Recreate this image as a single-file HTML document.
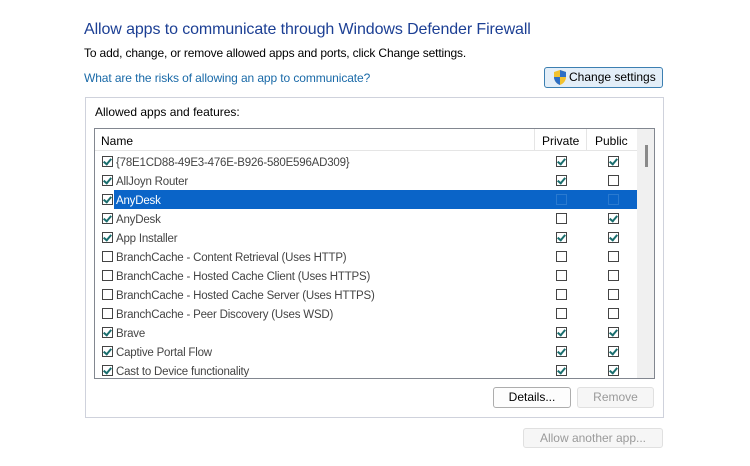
<!DOCTYPE html>
<html><head><style>
*{margin:0;padding:0;box-sizing:border-box}
body{width:750px;height:466px;background:#fff;font-family:"Segoe UI","Liberation Sans",sans-serif;position:relative;overflow:hidden;color:#000}
.a{position:absolute;white-space:nowrap}
.cb{position:absolute;width:11px;height:11px;border:1px solid #444;background:#fff}
.cb.c::after{content:"";position:absolute;left:2px;top:0px;width:3px;height:6px;border:solid #1a6e6e;border-width:0 2px 2px 0;transform:rotate(40deg)}
.cb.d{border-color:#2a7ad0;background:#0a64c8}
.btn{position:absolute;border:1px solid #adadad;border-radius:3px;background:#fdfdfd;font-size:12px;text-align:center;line-height:19px}
.dis{color:#9a9a9a;border-color:#e0e0e0;background:#f6f6f6}
</style></head><body>
<div class="a" style="left:84px;top:21px;font-size:16px;color:#1c3f94;letter-spacing:-0.1px">Allow apps to communicate through Windows Defender Firewall</div>
<div class="a" style="left:84px;top:46px;font-size:12px;letter-spacing:-0.15px">To add, change, or remove allowed apps and ports, click Change settings.</div>
<div class="a" style="left:84px;top:71px;font-size:12px;color:#1a6aa8;letter-spacing:-0.1px">What are the risks of allowing an app to communicate?</div>
<div class="btn" style="left:544px;top:67px;width:119px;height:21px;border-color:#3c7fb1;background:#e3eef8;text-align:left;padding-left:24px">Change settings</div>
<svg class="a" style="left:552px;top:69px" width="16" height="17" viewBox="0 0 16 17"><path d="M8 1 L14 3 V8 C14 12 11 15 8 16 C5 15 2 12 2 8 V3 Z" fill="#f2c230"/><path d="M8 1 L14 3 V8 H8 Z M8 8 V16 C5 15 2 12 2 8 Z" fill="#2d6fc6"/></svg>
<div class="a" style="left:85px;top:97px;width:579px;height:321px;border:1px solid #cfd2dc"></div>
<div class="a" style="left:95px;top:105px;font-size:12px">Allowed apps and features:</div>
<div class="a" style="left:94px;top:128px;width:561px;height:251px;border:1px solid #828790"></div>
<div class="a" style="left:95px;top:129px;width:542px;height:22px;border-bottom:1px solid #e5e5e5"></div>
<div class="a" style="left:534px;top:129px;width:1px;height:22px;background:#e5e5e5"></div>
<div class="a" style="left:586px;top:129px;width:1px;height:22px;background:#e5e5e5"></div>
<div class="a" style="left:101px;top:134px;font-size:12px">Name</div>
<div class="a" style="left:542px;top:134px;font-size:12px">Private</div>
<div class="a" style="left:595px;top:134px;font-size:12px">Public</div>
<div class="a" style="left:637px;top:129px;width:17px;height:249px;background:#f0f0f0"></div>
<div class="a" style="left:645px;top:145px;width:3px;height:22px;background:#8a8a8a"></div>
<div id="rows"></div>
<div class="btn" style="left:493px;top:387px;width:78px;height:21px">Details...</div>
<div class="btn dis" style="left:577px;top:387px;width:77px;height:21px">Remove</div>
<div class="btn dis" style="left:523px;top:428px;width:140px;height:20px">Allow another app...</div>
<script>
var d=[["{78E1CD88-49E3-476E-B926-580E596AD309}",1,1,1],["AllJoyn Router",1,1,0],["AnyDesk",1,2,2],["AnyDesk",1,0,1],["App Installer",1,1,1],["BranchCache - Content Retrieval (Uses HTTP)",0,0,0],["BranchCache - Hosted Cache Client (Uses HTTPS)",0,0,0],["BranchCache - Hosted Cache Server (Uses HTTPS)",0,0,0],["BranchCache - Peer Discovery (Uses WSD)",0,0,0],["Brave",1,1,1],["Captive Portal Flow",1,1,1],["Cast to Device functionality",1,1,1]];
var h="";d.forEach(function(r,i){var y=152+i*19;var sel=r[1]&&r[2]==2;
function cb(x,v){return '<div class="cb'+(v==1?' c':'')+(v==2?' d':'')+'" style="left:'+x+'px;top:'+(y+4)+'px"></div>';}
if(sel)h+='<div class="a" style="left:114px;top:'+y+'px;width:523px;height:19px;background:#0a64c8"></div>';
h+=cb(102,r[1])+'<div class="a" style="left:116px;top:'+(y+5)+'px;font-size:11.5px;line-height:12px;letter-spacing:-0.2px;color:'+(sel?'#fff':'#444')+'">'+r[0]+'</div>'+cb(556,r[2])+cb(608,r[3]);});
h='<div class="a" style="left:95px;top:152px;width:542px;height:225px;overflow:hidden"><div style="position:relative;left:-95px;top:-152px">'+h+'</div></div>';
document.getElementById("rows").innerHTML=h;
</script>
</body></html>
